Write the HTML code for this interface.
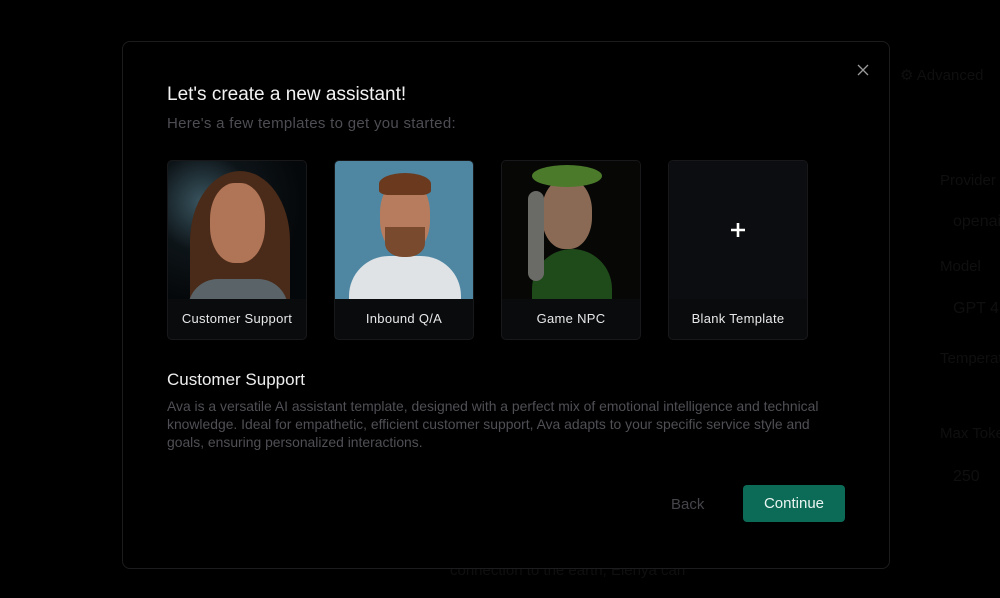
<!DOCTYPE html>
<html><head><meta charset="utf-8"><style>
body{margin:0;width:1000px;height:598px;background:#000;overflow:hidden;font-family:"Liberation Sans",sans-serif;position:relative}
.bg{position:absolute;color:#0f0f0f;font-size:15px;white-space:nowrap}
.modal{position:absolute;left:122px;top:41px;width:766px;height:526px;background:#000;border:1px solid #1c1c1e;border-radius:8px}
h1{position:absolute;left:44px;top:42px;margin:0;font-size:19px;font-weight:normal;color:#f2f2f2}
.sub{position:absolute;left:44px;top:73px;font-size:15px;color:#4d4d53;letter-spacing:.3px}
.card{position:absolute;top:118px;width:138px;height:178px;border:1px solid #18181b;border-radius:5px;background:#0a0b0d;overflow:hidden}
.img{height:138px;position:relative;overflow:hidden}
.lbl{position:absolute;bottom:0;left:0;right:0;height:40px;line-height:40px;text-align:center;color:#e8e8e8;font-size:13px;letter-spacing:.3px}
h2{position:absolute;left:44px;top:328px;margin:0;font-size:17px;font-weight:normal;color:#eee}
.desc{position:absolute;left:44px;top:355px;width:672px;font-size:13.9px;line-height:18px;color:#4f4f55}
.back{position:absolute;left:548px;top:454px;font-size:15px;color:#45454b}
.cont{position:absolute;left:620px;top:443px;width:102px;height:37px;background:#0c6b57;border-radius:4px;color:#eaf5f1;font-size:15px;text-align:center;line-height:37px}
.x{position:absolute;left:733px;top:21px}
</style></head><body>
<div class="bg" style="left:900px;top:66px">⚙ Advanced</div>
<div class="bg" style="left:940px;top:172px">Provider</div>
<div class="bg" style="left:953px;top:213px;font-size:16px">openai</div>
<div class="bg" style="left:940px;top:258px">Model</div>
<div class="bg" style="left:953px;top:300px;font-size:16px">GPT 4</div>
<div class="bg" style="left:940px;top:350px">Temperature</div>
<div class="bg" style="left:940px;top:425px">Max Tokens</div>
<div class="bg" style="left:953px;top:468px;font-size:16px">250</div>
<div class="bg" style="left:450px;top:562px">connection to the earth, Elenya can</div>
<div class="modal">
<svg class="x" width="14" height="14" viewBox="0 0 14 14"><path d="M2 2L12 12M12 2L2 12" stroke="#9a9a9a" stroke-width="1.3"/></svg>
<h1>Let's create a new assistant!</h1>
<div class="sub">Here's a few templates to get you started:</div>
<div class="card" style="left:44px"><div class="img" style="background:radial-gradient(circle at 25% 30%,#3a5560 0,#0d1418 35%,#05080a 70%)">
<div style="position:absolute;left:22px;top:10px;width:100px;height:140px;border-radius:50% 50% 10px 10px;background:#4a2a18"></div>
<div style="position:absolute;left:42px;top:22px;width:55px;height:80px;border-radius:45%;background:#b07456"></div>
<div style="position:absolute;left:20px;top:118px;width:100px;height:30px;background:#5a6468;border-radius:30px 30px 0 0"></div>
</div><div class="lbl">Customer Support</div></div>
<div class="card" style="left:211px"><div class="img" style="background:#4f87a3">
<div style="position:absolute;left:14px;top:95px;width:112px;height:60px;border-radius:40px 40px 0 0;background:#dfe3e6"></div>
<div style="position:absolute;left:45px;top:18px;width:50px;height:75px;border-radius:45%;background:#b77c5e"></div>
<div style="position:absolute;left:44px;top:12px;width:52px;height:22px;border-radius:50% 50% 20% 20%;background:#6b3a1e"></div>
<div style="position:absolute;left:50px;top:66px;width:40px;height:30px;border-radius:0 0 45% 45%;background:#7a4a2e"></div>
</div><div class="lbl">Inbound Q/A</div></div>
<div class="card" style="left:378px"><div class="img" style="background:#070806">
<div style="position:absolute;left:30px;top:88px;width:80px;height:60px;border-radius:40px 40px 0 0;background:#1f4a1a"></div>
<div style="position:absolute;left:40px;top:18px;width:50px;height:70px;border-radius:45%;background:#8a6a55"></div>
<div style="position:absolute;left:30px;top:4px;width:70px;height:22px;border-radius:50%;background:#4a7a2a"></div>
<div style="position:absolute;left:26px;top:30px;width:16px;height:90px;border-radius:8px;background:#6a6a66"></div>
</div><div class="lbl">Game NPC</div></div>
<div class="card" style="left:545px"><div class="img" style="background:#0c0d10"><svg style="position:absolute;left:61px;top:61px" width="16" height="16"><path d="M8 1V15M1 8H15" stroke="#fff" stroke-width="2.6"/></svg></div><div class="lbl">Blank Template</div></div>
<h2>Customer Support</h2>
<div class="desc">Ava is a versatile AI assistant template, designed with a perfect mix of emotional intelligence and technical knowledge. Ideal for empathetic, efficient customer support, Ava adapts to your specific service style and goals, ensuring personalized interactions.</div>
<div class="back">Back</div>
<div class="cont">Continue</div>
</div>
</body></html>
